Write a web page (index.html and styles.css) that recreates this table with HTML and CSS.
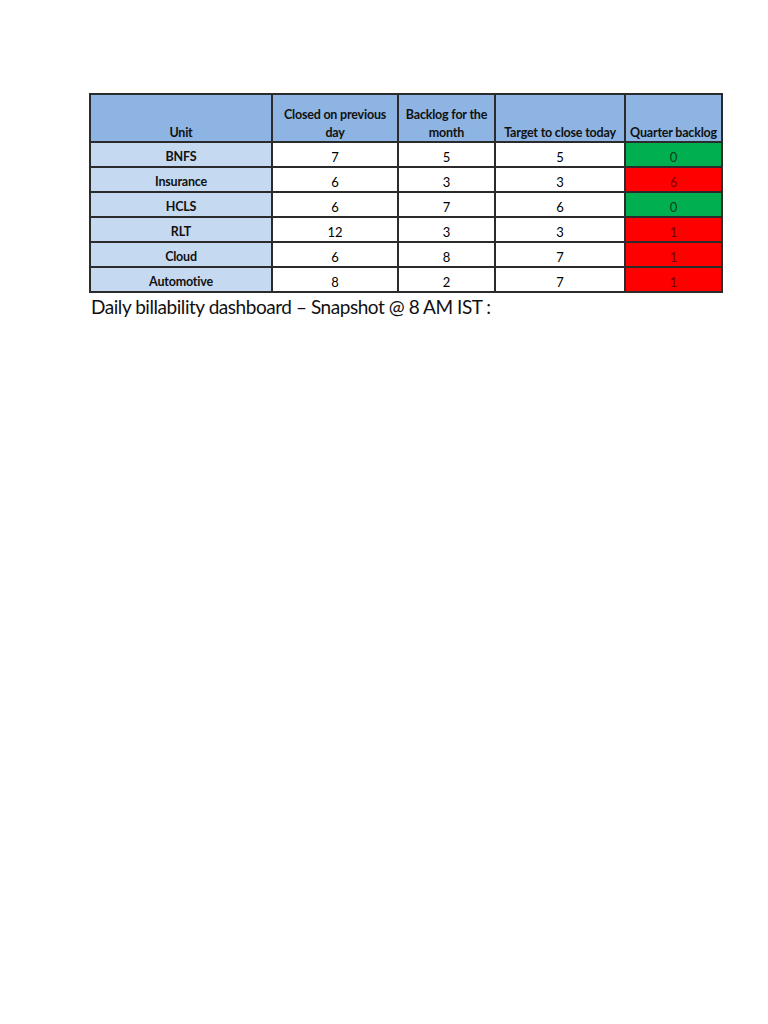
FILE: index.html
```html
<!DOCTYPE html>
<html>
<head>
<meta charset="utf-8">
<link rel="stylesheet" href="styles.css">
</head>
<body>
<div class="page">
  <table class="dash">
    <colgroup>
      <col class="c-unit">
      <col class="c-closed">
      <col class="c-backlog">
      <col class="c-target">
      <col class="c-quarter">
    </colgroup>
    <thead>
      <tr>
        <th><div class="hd">Unit</div></th>
        <th><div class="hd">Closed on previous day</div></th>
        <th><div class="hd">Backlog for the month</div></th>
        <th class="nowrap"><div class="hd">Target to close today</div></th>
        <th class="nowrap"><div class="hd">Quarter backlog</div></th>
      </tr>
    </thead>
    <tbody>
      <tr><td class="unit">BNFS</td><td>7</td><td>5</td><td>5</td><td class="ok">0</td></tr>
      <tr><td class="unit">Insurance</td><td>6</td><td>3</td><td>3</td><td class="bad">6</td></tr>
      <tr><td class="unit">HCLS</td><td>6</td><td>7</td><td>6</td><td class="ok">0</td></tr>
      <tr><td class="unit">RLT</td><td>12</td><td>3</td><td>3</td><td class="bad">1</td></tr>
      <tr><td class="unit">Cloud</td><td>6</td><td>8</td><td>7</td><td class="bad">1</td></tr>
      <tr><td class="unit">Automotive</td><td>8</td><td>2</td><td>7</td><td class="bad">1</td></tr>
    </tbody>
  </table>
  <p class="caption">Daily billability dashboard – Snapshot @ 8 AM IST :</p>
</div>
</body>
</html>
```

FILE: styles.css
```css
html, body {
  margin: 0;
  padding: 0;
  background: #ffffff;
}

.page {
  padding: 93px 0 0 89px;
  font-family: "Lato", "Liberation Sans", sans-serif;
  color: #111111;
}

.dash {
  border-collapse: collapse;
  table-layout: fixed;
  width: 634px;
  font-size: 12px;
}

.c-unit { width: 182px; }
.c-closed { width: 126px; }
.c-backlog { width: 97px; }
.c-target { width: 130px; }
.c-quarter { width: 97px; }

.dash th,
.dash td {
  border: 2px solid #2b2b2b;
  text-align: center;
  padding: 0 3px;
}

.dash th {
  height: 46px;
  background: #8db4e2;
  font-weight: 700;
  font-size: 12.5px;
  letter-spacing: -0.2px;
  line-height: 18px;
  vertical-align: bottom;
  padding-bottom: 0;
}

.dash th .hd {
  margin-bottom: -1px;
}

.dash th.nowrap {
  white-space: nowrap;
  padding: 0;
}

.dash td {
  height: 21px;
  background: #ffffff;
  font-size: 13px;
  font-weight: 400;
  line-height: 16px;
  vertical-align: bottom;
  padding-top: 1px;
  padding-bottom: 1px;
  color: #000000;
}

.dash td.unit {
  background: #c5d9f1;
  font-size: 12.5px;
  font-weight: 700;
  letter-spacing: -0.2px;
  color: #111111;
}

.dash td.ok {
  background: #00b050;
  color: #0b3d1a;
}

.dash td.bad {
  background: #ff0000;
  color: #7a0000;
}

.caption {
  margin: 2px 0 0 2px;
  font-family: "Lato", "Liberation Sans", sans-serif;
  font-size: 19px;
  letter-spacing: -0.45px;
  line-height: 24px;
  color: #111111;
}
```
